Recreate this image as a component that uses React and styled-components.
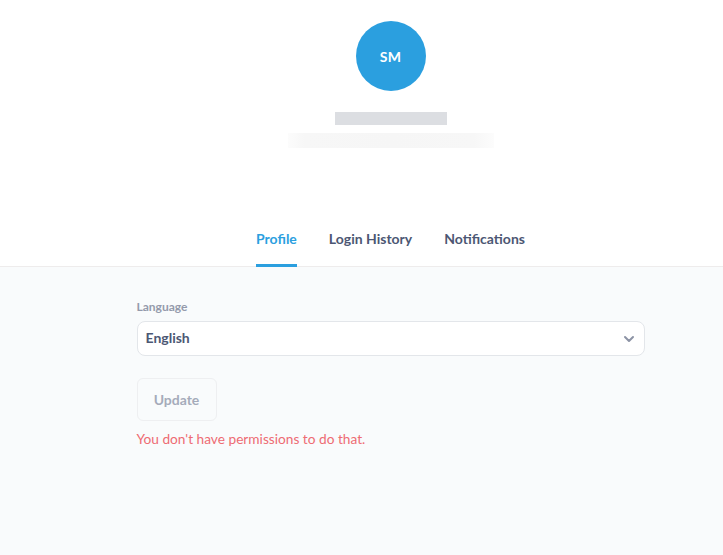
import styled, { createGlobalStyle } from "styled-components";

const GlobalStyle = createGlobalStyle`
  html, body {
    margin: 0;
    padding: 0;
    height: 100%;
    background: #f9fbfc;
  }
  body {
    font-family: Lato, "Open Sans", sans-serif;
    -webkit-font-smoothing: antialiased;
  }
  #root {
    min-height: 100%;
  }
`;

const Page = styled.div`
  min-height: 555px;
  display: flex;
  flex-direction: column;
  background: #f9fbfc;
`;

const Header = styled.header`
  background: #ffffff;
  border-bottom: 1px solid #eeecec;
  padding-left: 58px;
  display: flex;
  flex-direction: column;
  align-items: center;
`;

const Avatar = styled.div`
  margin-top: 21px;
  width: 70px;
  height: 70px;
  border-radius: 50%;
  background: #2b9fdf;
  color: #ffffff;
  display: flex;
  align-items: center;
  justify-content: center;
  font-size: 14px;
  font-weight: 700;
  letter-spacing: 0.2px;
`;

const NameBar = styled.div`
  margin-top: 21px;
  width: 112px;
  height: 13px;
  background: #dcdee2;
`;

const EmailBar = styled.div`
  margin-top: 8px;
  width: 206px;
  height: 15px;
  background: linear-gradient(
    to right,
    #fcfcfc 0,
    #f7f7f7 8%,
    #f6f6f6 50%,
    #f7f7f7 90%,
    #fcfcfc 100%
  );
`;

const Tabs = styled.nav`
  margin-top: 82px;
  display: flex;
  gap: 32px;
`;

const Tab = styled.div`
  padding-bottom: 17px;
  font-size: 14px;
  font-weight: 700;
  line-height: 17px;
  color: ${(p) => (p.$active ? "#2b9fdf" : "#4c5773")};
  border-bottom: 3px solid ${(p) => (p.$active ? "#2b9fdf" : "transparent")};
  margin-bottom: -1px;
`;

const Body = styled.main`
  flex: 1;
  padding-left: 58px;
  display: flex;
  justify-content: center;
`;

const Form = styled.div`
  width: 508px;
  padding-top: 32px;
  display: flex;
  flex-direction: column;
  align-items: flex-start;
`;

const Label = styled.label`
  font-size: 12px;
  font-weight: 700;
  color: #949aab;
  line-height: 15px;
  margin-bottom: 7px;
`;

const Select = styled.div`
  box-sizing: border-box;
  width: 100%;
  height: 35px;
  background: #ffffff;
  border: 1px solid #e3e6ea;
  border-radius: 8px;
  display: flex;
  align-items: center;
  justify-content: space-between;
  padding: 0 9px 2px 8px;
  font-size: 14px;
  font-weight: 700;
  color: #4c5773;
`;

const Chevron = styled.svg`
  width: 12px;
  height: 12px;
  margin-top: 2px;
  color: #8c93a5;
`;

const Button = styled.button`
  margin-top: 22px;
  box-sizing: border-box;
  width: 80px;
  height: 43px;
  border: 1px solid #eeeff1;
  border-radius: 6px;
  background: transparent;
  font-family: inherit;
  font-size: 14px;
  font-weight: 700;
  color: #a5abba;
`;

const ErrorText = styled.div`
  margin-top: 9px;
  font-size: 13.7px;
  line-height: 17px;
  color: #ee6b73;
`;

export default function App() {
  return (
    <Page>
      <GlobalStyle />
      <Header>
        <Avatar>SM</Avatar>
        <NameBar />
        <EmailBar />
        <Tabs>
          <Tab $active>Profile</Tab>
          <Tab>Login History</Tab>
          <Tab>Notifications</Tab>
        </Tabs>
      </Header>
      <Body>
        <Form>
          <Label>Language</Label>
          <Select>
            <span>English</span>
            <Chevron viewBox="0 0 12 12" fill="none">
              <path
                d="M2 4l4 4 4-4"
                stroke="currentColor"
                strokeWidth="2"
                strokeLinecap="round"
                strokeLinejoin="round"
              />
            </Chevron>
          </Select>
          <Button disabled>Update</Button>
          <ErrorText>You don't have permissions to do that.</ErrorText>
        </Form>
      </Body>
    </Page>
  );
}
